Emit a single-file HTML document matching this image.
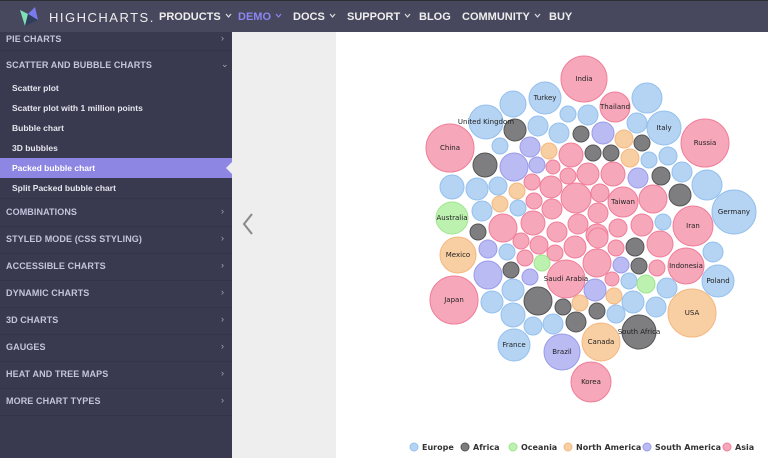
<!DOCTYPE html>
<html><head><meta charset="utf-8"><style>
*{margin:0;padding:0;box-sizing:border-box}
body{width:768px;height:458px;overflow:hidden;background:#fff;font-family:"Liberation Sans",sans-serif;position:relative}
.nav{position:absolute;left:0;top:0;width:768px;height:32px;background:#47475d;border-top:1px solid #2e2e36}
.nav .l{position:absolute;top:10px;font-size:11px;font-weight:bold;color:#eee;white-space:nowrap}
.ch{display:inline-block;width:7px;height:5px;margin-left:4px;vertical-align:2px}
.side{position:absolute;left:0;top:32px;width:232px;height:426px;background:#393950}
.gray{position:absolute;left:232px;top:32px;width:104px;height:426px;background:#eeeeee}
.cat{position:absolute;left:6px;font-size:9px;font-weight:bold;color:#c4c4dc;letter-spacing:.1px}
.sub{position:absolute;left:12px;font-size:8.5px;font-weight:bold;color:#e6e6ee}
.arr{position:absolute;left:221px;font-size:9px;color:#aaa}
.sep{position:absolute;left:0;width:232px;height:1px;background:#33334a}
.c{font-family:"DejaVu Sans",sans-serif;font-size:7px;fill:#222;text-anchor:middle;dominant-baseline:middle}
.b{fill:#b5d3f2;stroke:#93c0ee}.k{fill:#7e7e80;stroke:#555}.g{fill:#bdf1b0;stroke:#9ee68c}.o{fill:#f8cea3;stroke:#f5b780}.p{fill:#bbbbf3;stroke:#9a9aea}.r{fill:#f6a8ba;stroke:#f07d99}
circle{stroke-width:1}
</style></head><body>
<div class="nav">
<svg style="position:absolute;left:18px;top:5px" width="24" height="22" viewBox="0 0 24 22"><polygon points="2,4 10,8 7,20" fill="#7fe0b8"/><polygon points="10,8 17,1 20,14" fill="#7a7af0"/><polygon points="7,20 10,8 20,14" fill="#2f3e5c"/></svg>
<span class="l" style="left:49px;top:9px;font-weight:normal;font-size:13px;letter-spacing:1.5px;color:#eee">HIGHCHARTS.</span>
<span class="l" style="left:159px">PRODUCTS<svg class="ch" viewBox="0 0 7 5"><polyline points="1,1 3.5,4 6,1" fill="none" stroke="#ddd" stroke-width="1.2"/></svg></span>
<span class="l" style="left:238px;color:#8b86f0">DEMO<svg class="ch" viewBox="0 0 7 5"><polyline points="1,1 3.5,4 6,1" fill="none" stroke="#8b86f0" stroke-width="1.2"/></svg></span>
<span class="l" style="left:293px">DOCS<svg class="ch" viewBox="0 0 7 5"><polyline points="1,1 3.5,4 6,1" fill="none" stroke="#ddd" stroke-width="1.2"/></svg></span>
<span class="l" style="left:347px">SUPPORT<svg class="ch" viewBox="0 0 7 5"><polyline points="1,1 3.5,4 6,1" fill="none" stroke="#ddd" stroke-width="1.2"/></svg></span>
<span class="l" style="left:419px">BLOG</span>
<span class="l" style="left:462px">COMMUNITY<svg class="ch" viewBox="0 0 7 5"><polyline points="1,1 3.5,4 6,1" fill="none" stroke="#ddd" stroke-width="1.2"/></svg></span>
<span class="l" style="left:549px">BUY</span>
</div>
<div class="side">
<div class="cat" style="top:2px">PIE CHARTS</div><div class="arr" style="top:1px">›</div>
<div class="sep" style="top:18px"></div>
<div class="cat" style="top:28px">SCATTER AND BUBBLE CHARTS</div><div class="arr" style="top:27px">⌄</div>
<div class="sub" style="top:51px">Scatter plot</div>
<div class="sub" style="top:71px">Scatter plot with 1 million points</div>
<div class="sub" style="top:91px">Bubble chart</div>
<div class="sub" style="top:111px">3D bubbles</div>
<div style="position:absolute;left:0;top:126px;width:232px;height:20px;background:#8e86e3"></div>
<div style="position:absolute;left:226px;top:130px;width:0;height:0;border-top:6px solid transparent;border-bottom:6px solid transparent;border-right:6px solid #eee"></div>
<div class="sub" style="top:131px;color:#fff">Packed bubble chart</div>
<div class="sub" style="top:151px">Split Packed bubble chart</div>
<div class="sep" style="top:166px"></div>
<div class="cat" style="top:175px">COMBINATIONS</div><div class="arr" style="top:174px">›</div><div class="sep" style="top:194px"></div>
<div class="cat" style="top:202px">STYLED MODE (CSS STYLING)</div><div class="arr" style="top:201px">›</div><div class="sep" style="top:221px"></div>
<div class="cat" style="top:229px">ACCESSIBLE CHARTS</div><div class="arr" style="top:228px">›</div><div class="sep" style="top:248px"></div>
<div class="cat" style="top:256px">DYNAMIC CHARTS</div><div class="arr" style="top:255px">›</div><div class="sep" style="top:275px"></div>
<div class="cat" style="top:283px">3D CHARTS</div><div class="arr" style="top:282px">›</div><div class="sep" style="top:302px"></div>
<div class="cat" style="top:310px">GAUGES</div><div class="arr" style="top:309px">›</div><div class="sep" style="top:329px"></div>
<div class="cat" style="top:337px">HEAT AND TREE MAPS</div><div class="arr" style="top:336px">›</div><div class="sep" style="top:356px"></div>
<div class="cat" style="top:364px">MORE CHART TYPES</div><div class="arr" style="top:363px">›</div><div class="sep" style="top:383px"></div>
</div>
<div class="gray"></div>
<svg style="position:absolute;left:240px;top:212px" width="16" height="24"><polyline points="12,2 4,12 12,22" fill="none" stroke="#888" stroke-width="2"/></svg>
<svg style="position:absolute;left:0;top:0" width="768" height="458">
<circle class="b" cx="513" cy="104" r="13"/><circle class="b" cx="568" cy="114" r="8"/><circle class="b" cx="588" cy="115" r="10"/><circle class="b" cx="647" cy="98" r="15"/><circle class="b" cx="637" cy="123" r="10"/>
<circle class="k" cx="515" cy="130" r="11"/><circle class="b" cx="538" cy="126" r="10"/><circle class="b" cx="559" cy="133" r="10"/><circle class="k" cx="581" cy="134" r="8"/><circle class="p" cx="603" cy="133" r="11"/><circle class="o" cx="624" cy="139" r="9"/><circle class="k" cx="642" cy="143" r="8"/>
<circle class="b" cx="500" cy="146" r="8"/><circle class="p" cx="530" cy="147" r="10"/><circle class="o" cx="549" cy="151" r="8"/><circle class="r" cx="571" cy="155" r="12"/><circle class="k" cx="593" cy="153" r="8"/><circle class="k" cx="611" cy="153" r="8"/><circle class="o" cx="630" cy="158" r="9"/><circle class="b" cx="649" cy="160" r="8"/><circle class="b" cx="668" cy="156" r="9"/>
<circle class="k" cx="485" cy="165" r="12"/><circle class="p" cx="514" cy="167" r="14"/><circle class="p" cx="537" cy="165" r="8"/><circle class="r" cx="553" cy="167" r="7"/><circle class="r" cx="568" cy="176" r="8"/><circle class="r" cx="588" cy="174" r="11"/><circle class="r" cx="613" cy="174" r="12"/><circle class="p" cx="638" cy="178" r="10"/><circle class="k" cx="661" cy="176" r="9"/><circle class="b" cx="682" cy="172" r="10"/><circle class="b" cx="707" cy="185" r="15"/>
<circle class="b" cx="452" cy="187" r="12"/><circle class="b" cx="477" cy="189" r="11"/><circle class="b" cx="498" cy="186" r="9"/><circle class="o" cx="517" cy="191" r="8"/><circle class="r" cx="532" cy="182" r="8"/><circle class="r" cx="551" cy="187" r="11"/><circle class="r" cx="576" cy="198" r="15"/><circle class="r" cx="600" cy="193" r="9"/><circle class="r" cx="653" cy="199" r="14"/><circle class="k" cx="680" cy="195" r="11"/>
<circle class="b" cx="482" cy="211" r="10"/><circle class="o" cx="500" cy="204" r="8"/><circle class="b" cx="518" cy="208" r="8"/><circle class="r" cx="534" cy="201" r="8"/><circle class="r" cx="552" cy="209" r="10"/><circle class="r" cx="598" cy="213" r="10"/>
<circle class="r" cx="503" cy="228" r="14"/><circle class="r" cx="533" cy="223" r="12"/><circle class="r" cx="557" cy="232" r="10"/><circle class="r" cx="578" cy="224" r="10"/><circle class="r" cx="597" cy="235" r="11"/><circle class="r" cx="618" cy="228" r="9"/><circle class="r" cx="642" cy="225" r="11"/><circle class="b" cx="663" cy="222" r="8"/><circle class="k" cx="478" cy="232" r="8"/>
<circle class="p" cx="488" cy="249" r="9"/><circle class="b" cx="507" cy="252" r="8"/><circle class="r" cx="521" cy="241" r="8"/><circle class="r" cx="539" cy="245" r="9"/><circle class="r" cx="525" cy="258" r="8"/><circle class="r" cx="555" cy="253" r="8"/><circle class="r" cx="575" cy="247" r="11"/><circle class="r" cx="598" cy="238" r="10"/><circle class="r" cx="616" cy="248" r="8"/><circle class="k" cx="635" cy="247" r="9"/><circle class="r" cx="660" cy="244" r="13"/>
<circle class="g" cx="542" cy="263" r="8"/><circle class="p" cx="488" cy="275" r="14"/><circle class="k" cx="511" cy="270" r="8"/><circle class="p" cx="530" cy="277" r="8"/><circle class="r" cx="597" cy="263" r="14"/><circle class="p" cx="621" cy="265" r="8"/><circle class="k" cx="639" cy="266" r="8"/><circle class="r" cx="657" cy="268" r="8"/><circle class="b" cx="713" cy="252" r="10"/>
<circle class="b" cx="513" cy="290" r="11"/><circle class="b" cx="492" cy="302" r="11"/><circle class="k" cx="538" cy="301" r="14"/><circle class="p" cx="595" cy="290" r="11"/><circle class="r" cx="612" cy="279" r="7"/><circle class="b" cx="629" cy="281" r="8"/><circle class="g" cx="646" cy="284" r="9"/><circle class="b" cx="667" cy="288" r="10"/>
<circle class="k" cx="563" cy="307" r="8"/><circle class="o" cx="580" cy="303" r="8"/><circle class="o" cx="614" cy="296" r="8"/><circle class="b" cx="633" cy="302" r="11"/><circle class="b" cx="656" cy="307" r="10"/><circle class="b" cx="513" cy="315" r="12"/><circle class="k" cx="597" cy="311" r="8"/><circle class="b" cx="616" cy="314" r="9"/><circle class="b" cx="533" cy="326" r="9"/><circle class="b" cx="553" cy="324" r="10"/><circle class="k" cx="576" cy="322" r="10"/>
<circle class="r" cx="584" cy="79" r="23"/><text class="c" x="584" y="79">India</text>
<circle class="b" cx="545" cy="98" r="16"/><text class="c" x="545" y="98">Turkey</text>
<circle class="r" cx="615" cy="107" r="15"/><text class="c" x="615" y="107">Thailand</text>
<circle class="b" cx="486" cy="122" r="17"/><text class="c" x="486" y="122">United Kingdom</text>
<circle class="b" cx="664" cy="128" r="17"/><text class="c" x="664" y="128">Italy</text>
<circle class="r" cx="705" cy="143" r="24"/><text class="c" x="705" y="143">Russia</text>
<circle class="r" cx="450" cy="148" r="24"/><text class="c" x="450" y="148">China</text>
<circle class="b" cx="734" cy="212" r="22"/><text class="c" x="734" y="212">Germany</text>
<circle class="r" cx="623" cy="202" r="15"/><text class="c" x="623" y="202">Taiwan</text>
<circle class="r" cx="693" cy="226" r="20"/><text class="c" x="693" y="226">Iran</text>
<circle class="g" cx="452" cy="218" r="16"/><text class="c" x="452" y="218">Australia</text>
<circle class="o" cx="458" cy="255" r="18"/><text class="c" x="458" y="255">Mexico</text>
<circle class="r" cx="686" cy="266" r="18"/><text class="c" x="686" y="266">Indonesia</text>
<circle class="b" cx="718" cy="281" r="16"/><text class="c" x="718" y="281">Poland</text>
<circle class="r" cx="454" cy="300" r="24"/><text class="c" x="454" y="300">Japan</text>
<circle class="r" cx="566" cy="279" r="19"/><text class="c" x="566" y="279">Saudi Arabia</text>
<circle class="o" cx="692" cy="313" r="24"/><text class="c" x="692" y="313">USA</text>
<circle class="k" cx="639" cy="332" r="17"/><text class="c" x="639" y="332">South Africa</text>
<circle class="o" cx="601" cy="342" r="19"/><text class="c" x="601" y="342">Canada</text>
<circle class="b" cx="514" cy="345" r="16"/><text class="c" x="514" y="345">France</text>
<circle class="p" cx="562" cy="352" r="18"/><text class="c" x="562" y="352">Brazil</text>
<circle class="r" cx="591" cy="382" r="20"/><text class="c" x="591" y="382">Korea</text>
<g style="font-family:'DejaVu Sans',sans-serif;font-size:8px;font-weight:bold;fill:#333">
<circle class="b" cx="414" cy="447" r="4"/><text x="422" y="450">Europe</text>
<circle class="k" cx="465" cy="447" r="4"/><text x="473" y="450">Africa</text>
<circle class="g" cx="513" cy="447" r="4"/><text x="521" y="450">Oceania</text>
<circle class="o" cx="568" cy="447" r="4"/><text x="576" y="450">North America</text>
<circle class="p" cx="647" cy="447" r="4"/><text x="655" y="450">South America</text>
<circle class="r" cx="727" cy="447" r="4"/><text x="735" y="450">Asia</text>
</g>
</svg>
</body></html>
